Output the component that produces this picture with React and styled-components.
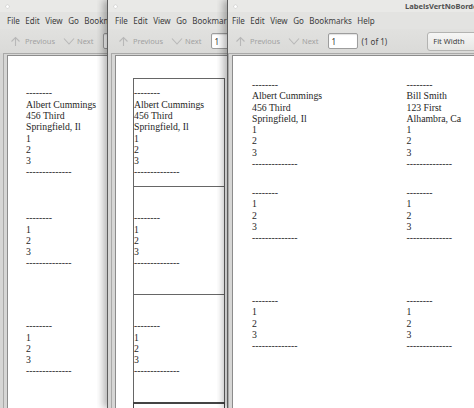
import styled, { createGlobalStyle } from "styled-components";

const GlobalStyle = createGlobalStyle`
  html, body {
    margin: 0;
    padding: 0;
  }
  body {
    background: #3c3b37;
    overflow: hidden;
  }
`;

const MENU = ["File", "Edit", "View", "Go", "Bookmarks", "Help"];

const FULL = (a) => ["--------", a.name, a.street, a.city, "1", "2", "3", "--------------"];
const SHORT = ["--------", "1", "2", "3", "--------------"];

const albert = { name: "Albert Cummings", street: "456 Third", city: "Springfield, Il" };
const bill = { name: "Bill Smith", street: "123 First", city: "Alhambra, Ca" };

const PrevIcon = () => (
  <svg width="11" height="11" viewBox="0 0 11 11" fill="none" stroke="#b8b8b8" strokeWidth="1.1">
    <path d="M1.5 5.5 L5.5 1.5 L9.5 5.5" />
    <path d="M5.5 1.8 V10" />
  </svg>
);

const NextIcon = () => (
  <svg width="12" height="10" viewBox="0 0 12 10" fill="none" stroke="#b8b8b8" strokeWidth="1.1">
    <path d="M1 2.5 L6 8 L11 2.5" />
  </svg>
);

const ViewerWindow = ({ left, width, z, inset, title, titleOffset, pagePad, cols, colWidth, bordered, center, rows }) => {
  return (
    <Window $left={left} $width={width} $z={z}>
      <TitleBar>
        <Dot />
        {title && <Title $offset={titleOffset}>{title}</Title>}
      </TitleBar>

      <MenuBar $inset={inset}>
        {MENU.map((m) => (
          <span key={m}>{m}</span>
        ))}
      </MenuBar>

      <ToolBar $inset={inset}>
        <ToolButton>
          <PrevIcon />
          Previous
        </ToolButton>
        <ToolButton $gap={2} $ml={5}>
          <NextIcon />
          Next
        </ToolButton>
        <PageInput>1</PageInput>
        <PageCount>(1 of 1)</PageCount>
        <ZoomSelect>Fit Width</ZoomSelect>
      </ToolBar>

      <Doc $inset={inset}>
        <Frame>
          <Page $pad={pagePad}>
            <LabelGrid $cols={cols} $w={colWidth}>
              {rows.map((row, r) =>
                row.map((lines, c) => (
                  <Label
                    key={`${r}-${c}`}
                    $bordered={bordered}
                    $center={center}
                    $heavy={bordered && lines.length === 0}
                  >
                    {lines.map((l, i) => (
                      <span key={i}>{l}</span>
                    ))}
                  </Label>
                ))
              )}
            </LabelGrid>
          </Page>
        </Frame>
      </Doc>
    </Window>
  );
};

const App = () => {
  return (
    <>
      <GlobalStyle />
      <Desktop>
        <ViewerWindow
          left={-1}
          width={116}
          z={1}
          inset={7}
          pagePad={17}
          cols={1}
          colWidth={92}
          center
          rows={[[FULL(albert)], [SHORT], [SHORT], [[]]]}
        />
        <ViewerWindow
          left={107}
          width={128}
          z={2}
          inset={7}
          pagePad={17}
          cols={1}
          colWidth={92}
          bordered
          center
          rows={[[FULL(albert)], [SHORT], [SHORT], [[]]]}
        />
        <ViewerWindow
          left={227}
          width={260}
          z={3}
          inset={4}
          title="LabelsVertNoBorder.pdf"
          titleOffset={168}
          pagePad={18}
          cols={2}
          colWidth={154.5}
          rows={[
            [FULL(albert), FULL(bill)],
            [SHORT, SHORT],
            [SHORT, SHORT],
          ]}
        />
      </Desktop>
    </>
  );
};

export default App;

const Desktop = styled.div`
  position: relative;
  width: 474px;
  height: 408px;
  overflow: hidden;
  background: #3c3b37;
`;

const Window = styled.div`
  position: absolute;
  top: 0;
  left: ${(p) => p.$left}px;
  z-index: ${(p) => p.$z};
  width: ${(p) => p.$width}px;
  height: 408px;
  overflow: hidden;

  display: flex;
  flex-direction: column;

  background: #dfdfdd;
  border-left: 1px solid #5e5e5e;
  box-shadow: -4px 0 7px rgba(0, 0, 0, 0.28);
  clip-path: inset(0 0 0 -10px);
`;

const TitleBar = styled.div`
  height: 12px;
  flex-shrink: 0;
  display: flex;
  align-items: center;
  padding-left: 6px;
  background: #e9e9e7;
`;

const Dot = styled.span`
  width: 3px;
  height: 3px;
  flex-shrink: 0;
  border-radius: 50%;
  background: #ffffff;
  box-shadow: 0 0 0 0.5px #c9c9c9;
`;

const Title = styled.span`
  margin-left: ${(p) => p.$offset}px;
  font-family: "Noto Sans", sans-serif;
  font-weight: 700;
  font-size: 7.5px;
  color: #505050;
  white-space: nowrap;
`;

const MenuBar = styled.div`
  height: 17px;
  flex-shrink: 0;
  display: flex;
  align-items: center;
  gap: 5.5px;
  padding-left: ${(p) => p.$inset}px;

  font-family: "Noto Sans", sans-serif;
  font-size: 8px;
  color: #3c3c3c;
  white-space: nowrap;
  background: #e3e3e1;
`;

const ToolBar = styled.div`
  height: 24px;
  flex-shrink: 0;
  display: flex;
  align-items: center;
  padding-left: ${(p) => p.$inset}px;

  font-family: "Noto Sans", sans-serif;
  font-size: 7.5px;
  white-space: nowrap;
  background: linear-gradient(#e1e1df, #dadad8);
`;

const ToolButton = styled.span`
  display: flex;
  align-items: center;
  flex-shrink: 0;
  gap: ${(p) => p.$gap ?? 4}px;
  margin-left: ${(p) => p.$ml ?? 0}px;
  padding-left: 3px;
  color: #a2a2a2;
`;

const PageInput = styled.span`
  margin-left: 9px;
  width: 30px;
  height: 16px;
  box-sizing: border-box;
  flex-shrink: 0;
  display: flex;
  align-items: center;
  padding-left: 3px;

  font-size: 8px;
  color: #333;
  background: #fff;
  border: 1px solid #9d9d9d;
  border-radius: 2px;
  box-shadow: inset 0 1px 1px rgba(0, 0, 0, 0.12);
`;

const PageCount = styled.span`
  margin-left: 4px;
  flex-shrink: 0;
  font-size: 8px;
  color: #3c3c3c;
`;

const ZoomSelect = styled.span`
  margin-left: 40px;
  height: 19px;
  box-sizing: border-box;
  flex-shrink: 0;
  display: flex;
  align-items: center;
  padding: 0 40px 0 5px;

  font-size: 7.5px;
  color: #3c3c3c;
  background: linear-gradient(#f6f6f5, #e6e6e4);
  border: 1px solid #b3b3b1;
  border-radius: 3px;
`;

const Doc = styled.div`
  flex: 1;
  min-height: 0;
  display: flex;
  flex-direction: column;
  padding-left: ${(p) => p.$inset - 4}px;
  background: #d6d6d5;
`;

const Frame = styled.div`
  flex: 1;
  display: flex;
  flex-direction: column;
  padding: 1px 0 0 3px;
  border-top: 1px solid #a9a9a8;
  border-left: 1px solid #a9a9a8;
`;

const Page = styled.div`
  flex: 1;
  padding: 22px 0 0 ${(p) => p.$pad}px;
  background: #fff;
  border-top: 1px solid #8c8c8c;
  border-left: 1px solid #8c8c8c;
`;

const LabelGrid = styled.div`
  display: grid;
  grid-template-columns: repeat(${(p) => p.$cols}, ${(p) => p.$w}px);
`;

const Label = styled.div`
  height: 108px;
  box-sizing: border-box;
  display: flex;
  flex-direction: column;
  justify-content: ${(p) => (p.$center ? "center" : "flex-start")};

  border-style: solid;
  border-width: ${(p) => (p.$heavy ? "2px 1px 0 1px" : "1px 1px 0 1px")};
  border-color: ${(p) => (p.$bordered ? (p.$heavy ? "#444" : "#666") : "transparent")};

  font-family: "Liberation Serif", serif;
  font-size: 9.75px;
  line-height: 11.3px;
  color: #1e1e1e;
  white-space: nowrap;
`;
